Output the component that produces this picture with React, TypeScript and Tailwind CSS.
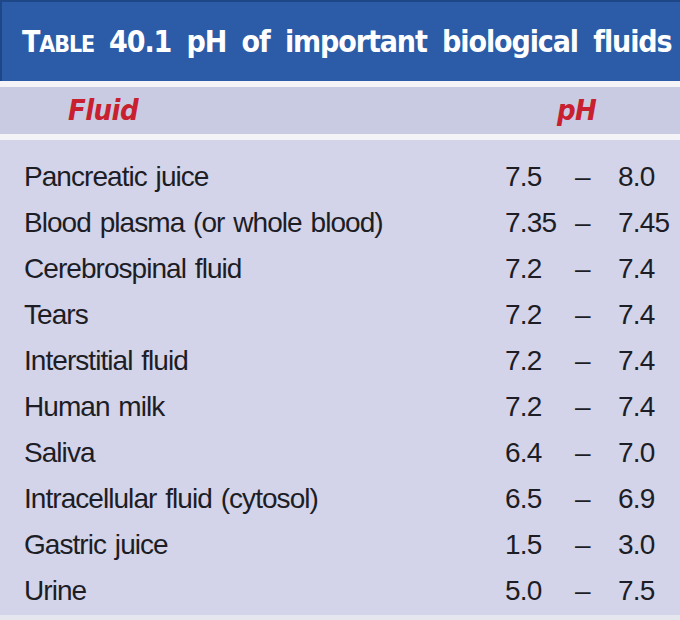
import React from "react";

const rows: [string, string, string][] = [
  ["Pancreatic juice", "7.5", "8.0"],
  ["Blood plasma (or whole blood)", "7.35", "7.45"],
  ["Cerebrospinal fluid", "7.2", "7.4"],
  ["Tears", "7.2", "7.4"],
  ["Interstitial fluid", "7.2", "7.4"],
  ["Human milk", "7.2", "7.4"],
  ["Saliva", "6.4", "7.0"],
  ["Intracellular fluid (cytosol)", "6.5", "6.9"],
  ["Gastric juice", "1.5", "3.0"],
  ["Urine", "5.0", "7.5"],
];

export default function App() {
  return (
    <div className="w-[680px] h-[620px] flex flex-col overflow-hidden bg-[#d3d4e9]">
      <div className="h-[81px] shrink-0 bg-[#2c5ca8] border-t-2 border-l-2 border-[#1e4787] flex items-center pl-[20px]">
        <h1
          className="text-white font-bold text-[30px] leading-none whitespace-nowrap font-stretch-condensed tracking-[-1.1px] [word-spacing:7px]"
          style={{ fontFamily: '"DejaVu Sans Condensed", "DejaVu Sans", sans-serif' }}
        >
          <span>T</span>
          <span className="text-[23px]">ABLE</span>
          <span className="ml-[15px]">40.1 pH of important biological fluids</span>
        </h1>
      </div>
      <div className="h-[6px] shrink-0 bg-[#f4f4f8]" />
      <div
        className="h-[47px] shrink-0 bg-[#c9cbe2] grid grid-cols-[557px_1fr] items-center text-[#c8202e] font-bold italic text-[29px] leading-none font-stretch-condensed tracking-[-0.6px]"
        style={{ fontFamily: '"DejaVu Sans Condensed", "DejaVu Sans", sans-serif' }}
      >
        <div className="pl-[68px]">Fluid</div>
        <div>pH</div>
      </div>
      <div className="h-[6px] shrink-0 bg-[#f4f4f8]" />
      <div
        className="flex-1 pt-[14px] text-[#1d1d26] text-[28px] leading-none"
        style={{ fontFamily: '"Liberation Sans", Arial, sans-serif' }}
      >
        {rows.map(([name, lo, hi]) => (
          <div
            key={name}
            className="h-[46px] grid grid-cols-[481px_70px_43px_1fr] items-center pl-[24px] whitespace-nowrap"
          >
            <div className="tracking-[-0.95px] [word-spacing:2px]">{name}</div>
            <div className="tracking-[-0.8px]">{lo}</div>
            <div>–</div>
            <div className="tracking-[-0.8px]">{hi}</div>
          </div>
        ))}
      </div>
      <div className="h-[5px] shrink-0 bg-[#e6e6ef]" />
    </div>
  );
}
